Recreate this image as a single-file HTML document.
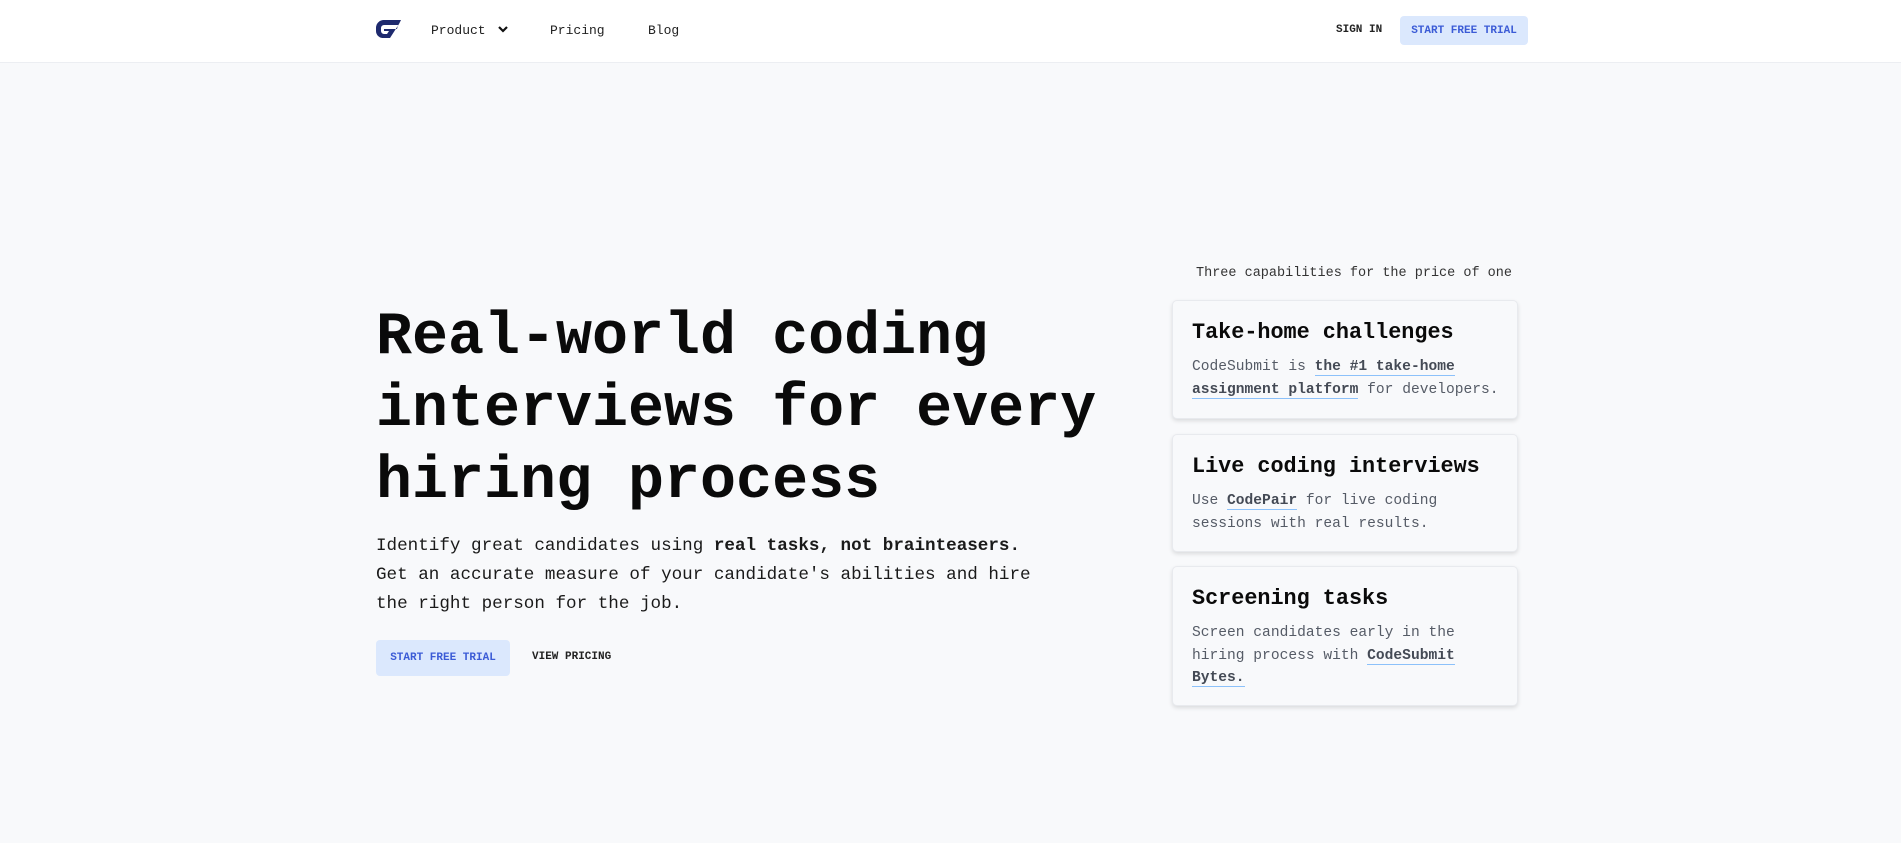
<!DOCTYPE html>
<html><head><meta charset="utf-8"><style>
*{margin:0;padding:0;box-sizing:border-box}
body{width:1901px;height:843px;overflow:hidden;background:#f8f9fb;font-family:"Liberation Mono",monospace;color:#111;position:relative}
.nav{position:absolute;left:0;top:0;width:1901px;height:63px;background:#fff;border-bottom:1px solid #eceef2}
.a{position:absolute;white-space:nowrap}
.navt{font-size:13px;color:#222;top:23px}
.btn{background:#dbe8fd;color:#3b5bd6;border-radius:4px;font-weight:bold;font-size:11px;display:flex;align-items:center;justify-content:center}
h1{font-size:60px;line-height:72px;font-weight:bold;letter-spacing:0;color:#0a0a0a}
.p{font-size:17.6px;line-height:29px;color:#1a1a1a}
.card{position:absolute;left:1172px;width:346px;background:#f8f9fb;border:1px solid #e8eaee;border-radius:5px;box-shadow:0 2px 4px rgba(0,0,0,.12);padding:0 19px}
.card h3{font-size:21.8px;font-weight:bold;margin-top:18px;line-height:28px;color:#0a0a0a}
.card p{font-size:14.6px;line-height:22.5px;color:#555b66;margin-top:9px;white-space:nowrap}
.card b{color:#444a55;border-bottom:1.5px solid #8cc1fa}
</style></head><body>
<div class="nav">
<svg class="a" style="left:375px;top:19px" width="28" height="22" viewBox="0 0 28 22"><path d="M8 1h18l-2 4-9 14h-7A7 7 0 0 1 1 12V9a8 8 0 0 1 7-8zm1 5a3 3 0 0 0-3 3v3a3 3 0 0 0 3 3h3l2-3h-5v-2h13l1-4z" fill="#1e2a6e"/></svg>
<div class="a navt" style="left:431px">Product <svg width="12" height="10" viewBox="0 0 12 10" style="margin-left:4px"><path d="M2 3l4 4 4-4" stroke="#111" stroke-width="2.2" fill="none"/></svg></div>
<div class="a navt" style="left:550px">Pricing</div>
<div class="a navt" style="left:648px">Blog</div>
<div class="a" style="left:1336px;top:24px;font-size:11px;font-weight:bold;color:#222">SIGN IN</div>
<div class="a btn" style="left:1400px;top:16px;width:128px;height:29px">START FREE TRIAL</div>
</div>
<h1 class="a" style="left:376px;top:302px">Real-world coding<br>interviews for every<br>hiring process</h1>
<div class="a p" style="left:376px;top:532px">Identify great candidates using <b>real tasks, not brainteasers.</b><br>Get an accurate measure of your candidate's abilities and hire<br>the right person for the job.</div>
<div class="a btn" style="left:376px;top:640px;width:134px;height:36px">START FREE TRIAL</div>
<div class="a" style="left:532px;top:651px;font-size:11px;font-weight:bold;color:#222">VIEW PRICING</div>
<div class="a" style="left:1196px;top:266px;font-size:13.5px;color:#333">Three capabilities for the price of one</div>
<div class="card" style="top:300px;height:119px"><h3>Take-home challenges</h3><p>CodeSubmit is <b>the #1 take-home</b><br><b>assignment platform</b> for developers.</p></div>
<div class="card" style="top:434px;height:118px"><h3>Live coding interviews</h3><p>Use <b>CodePair</b> for live coding<br>sessions with real results.</p></div>
<div class="card" style="top:566px;height:140px"><h3>Screening tasks</h3><p>Screen candidates early in the<br>hiring process with <b>CodeSubmit</b><br><b>Bytes.</b></p></div>
</body></html>
